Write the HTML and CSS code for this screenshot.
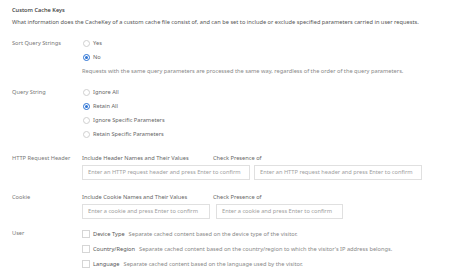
FILE: index.html
```html
<!DOCTYPE html>
<html>
<head>
<meta charset="utf-8">
<link rel="stylesheet" href="styles.css">
</head>
<body>
<div class="page">
  <div class="title">Custom Cache Keys</div>
  <div class="desc">What information does the CacheKey of a custom cache file consist of, and can be set to include or exclude specified parameters carried in user requests.</div>

  <div class="row sort">
    <div class="label opt-h">Sort Query Strings</div>
    <div class="content">
      <div class="opt"><span class="radio"></span>Yes</div>
      <div class="opt"><span class="radio on"></span>No</div>
      <div class="opt help">Requests with the same query parameters are processed the same way, regardless of the order of the query parameters.</div>
    </div>
  </div>

  <div class="row qs">
    <div class="label opt-h">Query String</div>
    <div class="content">
      <div class="opt"><span class="radio"></span>Ignore All</div>
      <div class="opt"><span class="radio on"></span>Retain All</div>
      <div class="opt"><span class="radio"></span>Ignore Specific Parameters</div>
      <div class="opt"><span class="radio"></span>Retain Specific Parameters</div>
    </div>
  </div>

  <div class="row field http">
    <div class="label">HTTP Request Header</div>
    <div class="content">
      <div class="sublabels">
        <span class="sl1">Include Header Names and Their Values</span>
        <span>Check Presence of</span>
      </div>
      <div class="inputs">
        <div class="input">Enter an HTTP request header and press Enter to confirm</div>
        <div class="input">Enter an HTTP request header and press Enter to confirm</div>
      </div>
    </div>
  </div>

  <div class="row field cookie">
    <div class="label">Cookie</div>
    <div class="content">
      <div class="sublabels">
        <span class="sl1">Include Cookie Names and Their Values</span>
        <span>Check Presence of</span>
      </div>
      <div class="inputs">
        <div class="input">Enter a cookie and press Enter to confirm</div>
        <div class="input">Enter a cookie and press Enter to confirm</div>
      </div>
    </div>
  </div>

  <div class="row user">
    <div class="label chk-h">User</div>
    <div class="content">
      <div class="chk"><span class="box"></span><span class="name">Device Type</span><span class="note">Separate cached content based on the device type of the visitor.</span></div>
      <div class="chk"><span class="box"></span><span class="name">Country/Region</span><span class="note">Separate cached content based on the country/region to which the visitor's IP address belongs.</span></div>
      <div class="chk"><span class="box"></span><span class="name">Language</span><span class="note">Separate cached content based on the language used by the visitor.</span></div>
    </div>
  </div>
</div>
</body>
</html>
```

FILE: styles.css
```css
html, body {
  margin: 0;
  padding: 0;
  background: #ffffff;
}
body {
  font-family: "Noto Sans", "Open Sans", sans-serif;
  font-size: 5.68px;
  color: #444444;
}
.page {
  padding: 6px 12px 0 12px;
}
.title {
  line-height: 8px;
  font-weight: 500;
  color: #333333;
}
.desc {
  margin-top: 4px;
  line-height: 8px;
  color: #555555;
}
.row {
  display: grid;
  grid-template-columns: 70px 1fr;
}
.label {
  color: #777777;
  line-height: 8px;
  white-space: nowrap;
}
.label.opt-h {
  line-height: 14px;
}
.label.chk-h {
  line-height: 15px;
}
.sort { margin-top: 10px; }
.qs { margin-top: 7px; }
.http { margin-top: 13px; }
.cookie { margin-top: 13px; }
.user { margin-top: 7px; }

.opt {
  display: flex;
  align-items: center;
  height: 14px;
  color: #666666;
  white-space: nowrap;
}
.opt.help {
  color: #888888;
}
.radio {
  box-sizing: border-box;
  width: 7px;
  height: 7px;
  border: 1px solid #cfcfcf;
  border-radius: 50%;
  margin-left: 1px;
  margin-right: 3px;
  background: #fff;
  display: flex;
  align-items: center;
  justify-content: center;
}
.radio.on {
  border-color: #2a72d4;
}
.radio.on::after {
  content: "";
  width: 3px;
  height: 3px;
  border-radius: 50%;
  background: #2a72d4;
}
.sublabels {
  display: flex;
  line-height: 8px;
  color: #666666;
  white-space: nowrap;
}
.sl1 {
  width: 131px;
}
.inputs {
  display: flex;
  margin-top: 3px;
}
.input {
  box-sizing: border-box;
  height: 15px;
  border: 1px solid #e0e0e0;
  padding-left: 5px;
  line-height: 13px;
  color: #a0a0a0;
  white-space: nowrap;
  overflow: hidden;
}
.http .inputs { gap: 4px; }
.http .input { width: 168px; }
.cookie .inputs { gap: 6px; }
.cookie .input { width: 128px; }
.cookie .input + .input { width: 127px; }

.chk {
  display: flex;
  align-items: center;
  height: 15px;
  white-space: nowrap;
}
.box {
  box-sizing: border-box;
  width: 8px;
  height: 8px;
  border: 1px solid #d6d6d6;
  margin-right: 3px;
  background: #fff;
}
.name {
  color: #555555;
  margin-right: 4px;
}
.note {
  color: #888888;
}
```
